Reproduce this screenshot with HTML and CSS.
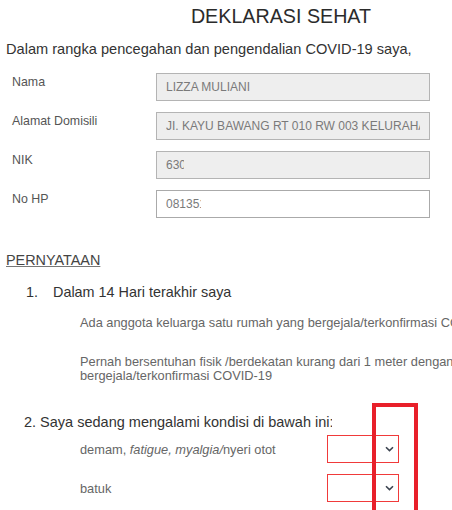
FILE: index.html
```html
<!DOCTYPE html>
<html>
<head>
<meta charset="utf-8">
<link rel="stylesheet" href="styles.css">
</head>
<body>
<div class="page">
  <h1 class="title">DEKLARASI SEHAT</h1>
  <p class="intro">Dalam rangka pencegahan dan pengendalian COVID-19 saya,</p>
  <div class="fields">
    <div class="field">
      <label class="label">Nama</label>
      <div class="input disabled"><span class="val">LIZZA MULIANI</span></div>
    </div>
    <div class="field">
      <label class="label">Alamat Domisili</label>
      <div class="input disabled"><span class="val">JI. KAYU BAWANG RT 010 RW 003 KELURAHAN</span></div>
    </div>
    <div class="field">
      <label class="label">NIK</label>
      <div class="input disabled"><span class="val clip-nik">6303</span></div>
    </div>
    <div class="field">
      <label class="label">No HP</label>
      <div class="input"><span class="val clip-hp">0813512</span></div>
    </div>
  </div>

  <h2 class="section">PERNYATAAN</h2>

  <div class="q">
    <div class="q-head"><span class="num">1.</span><span>Dalam 14 Hari terakhir saya</span></div>
    <p class="sub">Ada anggota keluarga satu rumah yang bergejala/terkonfirmasi COVID-19</p>
    <p class="sub sub2">Pernah bersentuhan fisik /berdekatan kurang dari 1 meter dengan orang yang<br>bergejala/terkonfirmasi COVID-19</p>
  </div>

  <div class="q q2">
    <div class="q-head2">2. Saya sedang mengalami kondisi di bawah ini:</div>
    <div class="opt first">
      <span class="opt-label">demam, <i>fatigue, myalgia/</i>nyeri otot</span>
      <div class="select"><svg class="chev" width="9" height="6" viewBox="0 0 9 6"><path d="M1 1.2 L4.5 4.6 L8 1.2" fill="none" stroke="#3c4450" stroke-width="1.6"/></svg></div>
    </div>
    <div class="opt">
      <span class="opt-label">batuk</span>
      <div class="select"><svg class="chev" width="9" height="6" viewBox="0 0 9 6"><path d="M1 1.2 L4.5 4.6 L8 1.2" fill="none" stroke="#3c4450" stroke-width="1.6"/></svg></div>
    </div>
  </div>
</div>
<div class="highlight"></div>
</body>
</html>
```

FILE: styles.css
```css
html, body {
  margin: 0;
  padding: 0;
  background: #fff;
  overflow: hidden;
}
body {
  font-family: "Liberation Sans", Arial, sans-serif;
  color: #333;
  position: relative;
  width: 452px;
  height: 510px;
}
.page {
  width: 550px;
  padding: 0 6px;
}
.title {
  margin: 5px 0 0 0;
  text-align: center;
  font-size: 19.7px;
  line-height: 23px;
  font-weight: normal;
  color: #2b2b2b;
}
.intro {
  margin: 12px 0 0 0;
  font-size: 14.6px;
  line-height: 18px;
  color: #333;
}
.fields {
  margin-top: 15px;
  display: flex;
  flex-direction: column;
  gap: 11px;
  padding-left: 6px;
}
.field {
  display: flex;
  align-items: flex-start;
}
.label {
  width: 144px;
  font-size: 12.4px;
  line-height: 15px;
  padding-top: 2px;
  color: #555;
}
.input {
  box-sizing: border-box;
  width: 274px;
  height: 28px;
  border: 1px solid #aaa;
  background: #fff;
  padding: 0 9px;
  display: flex;
  align-items: center;
  overflow: hidden;
  white-space: nowrap;
}
.input.disabled {
  background: #eee;
  border-color: #b4b4b4;
}
.val {
  font-size: 12px;
  color: #7a7a7a;
  overflow: hidden;
  white-space: nowrap;
}
.clip-nik {
  display: inline-block;
  width: 18px;
}
.clip-hp {
  display: inline-block;
  width: 35px;
}
.section {
  margin: 34px 0 0 0;
  font-size: 14.4px;
  line-height: 16px;
  font-weight: normal;
  color: #444;
  text-decoration: underline;
  text-decoration-color: #777;
}
.q-head {
  margin-top: 16px;
  display: flex;
  font-size: 14.4px;
  line-height: 17px;
  color: #333;
  padding-left: 20px;
}
.num {
  width: 27px;
}
.sub {
  margin: 14.6px 0 0 74px;
  font-size: 12.8px;
  line-height: 14px;
  color: #666;
  white-space: nowrap;
}
.sub2 {
  margin-top: 25px;
}
.q2 {
  margin-top: 31px;
}
.q-head2 {
  padding-left: 18px;
  font-size: 14.5px;
  line-height: 17px;
  color: #333;
  width: 308px;
  overflow: hidden;
  white-space: nowrap;
}
.opt {
  display: flex;
  align-items: flex-start;
  margin-top: 11px;
}
.opt.first {
  margin-top: 4px;
}
.opt-label {
  width: 247px;
  padding-left: 74px;
  padding-top: 8.5px;
  font-size: 12.8px;
  line-height: 14px;
  color: #666;
}
.select {
  box-sizing: border-box;
  width: 72px;
  height: 28px;
  border: 1px solid #f03a3a;
  background: #fff;
  display: flex;
  align-items: center;
  justify-content: flex-end;
  padding-right: 4px;
}
.highlight {
  position: absolute;
  left: 372px;
  top: 403px;
  width: 38px;
  height: 120px;
  border: 4px solid #e8202a;
}
```
